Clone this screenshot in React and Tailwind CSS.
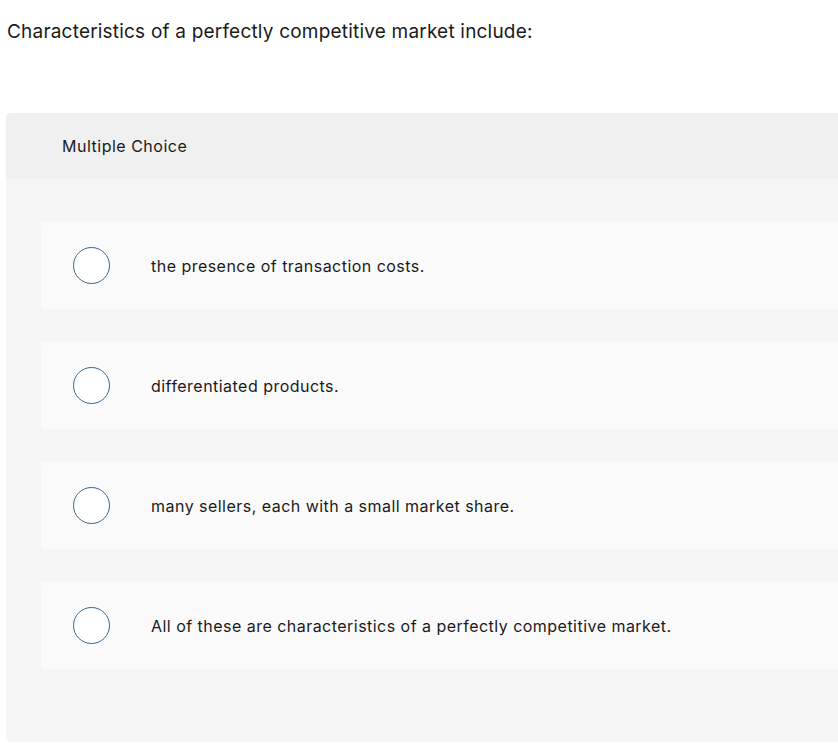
export default function App() {
  const options = [
    'the presence of transaction costs.',
    'differentiated products.',
    'many sellers, each with a small market share.',
    'All of these are characteristics of a perfectly competitive market.',
  ];

  return (
    <div className="w-[838px] h-[748px] overflow-hidden bg-white text-[#1a1a1a] font-['Inter',sans-serif]">
      {/* Question */}
      <p className="pl-[7px] pt-[19px] text-[19px] leading-[26px] tracking-[0.2px]">
        Characteristics of a perfectly competitive market include:
      </p>

      {/* Panel */}
      <div className="mt-[68px] ml-[6px] w-[900px] rounded-[5px] overflow-hidden bg-[#f5f5f5]">
        <div className="h-[66px] bg-[#f0f0f0] flex items-center pl-[56px] text-[16px] tracking-[0.5px]">
          Multiple Choice
        </div>
        <div className="pt-[43px] pb-[73px] pl-[35px] flex flex-col gap-[33px]">
          {options.map((opt, i) => (
            <div key={i} className="h-[87px] rounded-[4px] bg-[#fafafa] flex items-center pl-[32px]">
              <span className="w-[37px] h-[37px] rounded-full border border-[#3b6396] bg-white shrink-0" />
              <span className="ml-[41px] text-[16px] tracking-[0.47px]">{opt}</span>
            </div>
          ))}
        </div>
      </div>
    </div>
  );
}
